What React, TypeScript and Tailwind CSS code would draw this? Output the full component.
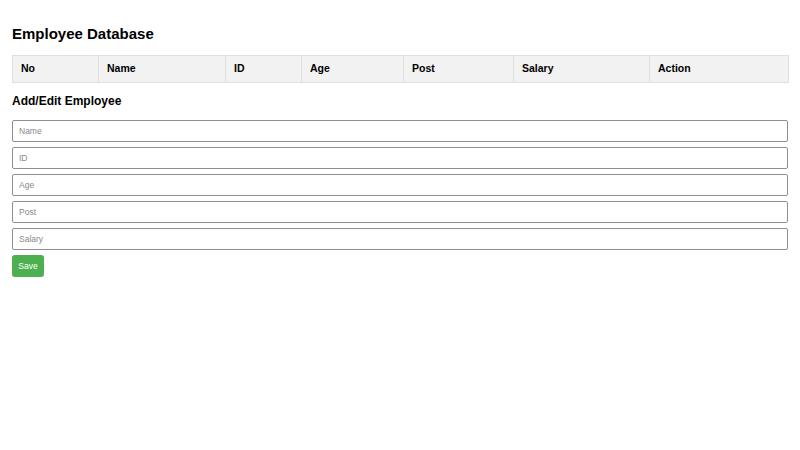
import React, { useState } from 'react';

const columns = [
  { label: 'No', width: 'w-[86px]' },
  { label: 'Name', width: 'w-[127px]' },
  { label: 'ID', width: 'w-[76px]' },
  { label: 'Age', width: 'w-[102px]' },
  { label: 'Post', width: 'w-[110px]' },
  { label: 'Salary', width: 'w-[136px]' },
  { label: 'Action', width: 'w-[139px]' },
];

const fields = ['Name', 'ID', 'Age', 'Post', 'Salary'];

export default function App() {
  const [values, setValues] = useState<Record<string, string>>({});

  return (
    <div className="min-h-[450px] bg-white px-3 pt-[25px] font-['Liberation_Sans',Arial,sans-serif] text-black">
      <h1 className="text-[15px] font-bold leading-[17px]">Employee Database</h1>

      {/* Table */}
      <table className="mt-[13px] w-full table-fixed border-collapse">
        <thead>
          <tr className="bg-[#f2f2f2]">
            {columns.map((c) => (
              <th
                key={c.label}
                className={`${c.width} h-[27px] border border-[#e0e0e0] px-2 text-left text-[10.5px] font-bold`}
              >
                {c.label}
              </th>
            ))}
          </tr>
        </thead>
        <tbody />
      </table>

      <h2 className="mt-[11px] text-[12px] font-bold leading-[14px]">Add/Edit Employee</h2>

      {/* Form */}
      <form className="mt-[12px] flex flex-col gap-[5px]" onSubmit={(e) => e.preventDefault()}>
        {fields.map((f) => (
          <input
            key={f}
            type="text"
            placeholder={f}
            value={values[f] ?? ''}
            onChange={(e) => setValues({ ...values, [f]: e.target.value })}
            className="h-[22px] w-full rounded-[2px] border border-[#8f8f8f] px-[6px] text-[8.5px] placeholder-[#888] outline-none"
          />
        ))}
        <button
          type="submit"
          className="h-[22px] w-[32px] self-start rounded-[3px] bg-[#4caf50] text-[8.5px] text-white"
        >
          Save
        </button>
      </form>
    </div>
  );
}
